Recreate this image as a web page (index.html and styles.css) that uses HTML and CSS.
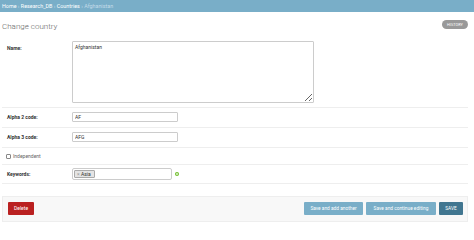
FILE: index.html
```html
<!DOCTYPE html>
<html lang="en">
<head>
<meta charset="utf-8">
<title>Change country</title>
<link rel="stylesheet" href="styles.css">
</head>
<body>
<div class="breadcrumbs">
  <a href="#">Home</a> › <a href="#">Research_DB</a> › <a href="#">Countries</a> › <span class="current">Afghanistan</span>
</div>
<div class="content">
  <div class="title-row">
    <h1>Change country</h1>
    <a class="history" href="#">HISTORY</a>
  </div>
  <form>
    <div class="module">
      <div class="form-row row-name">
        <label class="label">Name:</label>
        <textarea class="textarea">Afghanistan</textarea>
      </div>
      <div class="form-row row-text">
        <label class="label">Alpha 2 code:</label>
        <input class="text-input" type="text" value="AF">
      </div>
      <div class="form-row row-text">
        <label class="label">Alpha 3 code:</label>
        <input class="text-input" type="text" value="AFG">
      </div>
      <div class="form-row row-check">
        <input class="checkbox" type="checkbox" id="ind">
        <label class="check-label" for="ind">Independent</label>
      </div>
      <div class="form-row row-keywords">
        <label class="label">Keywords:</label>
        <div class="select-box">
          <span class="tag"><span class="tag-x">×</span> Asia</span>
        </div>
        <svg class="add-icon" width="4" height="4" viewBox="0 0 8 8"><circle cx="4" cy="4" r="4" fill="#70bf2b"/><path d="M4 2v4M2 4h4" stroke="#fff" stroke-width="1.4"/></svg>
      </div>
    </div>
    <div class="submit-row">
      <a class="btn btn-delete" href="#">Delete</a>
      <div class="right-buttons">
        <span class="btn btn-light btn-another">Save and add another</span>
        <span class="btn btn-light btn-continue">Save and continue editing</span>
        <span class="btn btn-save">SAVE</span>
      </div>
    </div>
  </form>
</div>
</body>
</html>
```
FILE: styles.css
```css
html, body {
  margin: 0;
  padding: 0;
  background: #fff;
  font-family: Roboto, "Liberation Sans", sans-serif;
  color: #333;
}

.breadcrumbs {
  height: 12px;
  line-height: 12px;
  background: #79aec8;
  color: #c4dce8;
  font-size: 5.4px;
  padding: 0 2px;
  white-space: nowrap;
}

.breadcrumbs a {
  color: #fff;
  text-decoration: none;
}

.breadcrumbs .current {
  color: #c4dce8;
}

.content {
  padding: 0 6px 0 2px;
}

.title-row {
  height: 26px;
  display: flex;
  align-items: center;
  justify-content: space-between;
}

h1 {
  margin: 0;
  font-size: 8px;
  font-weight: 300;
  color: #666;
  padding-top: 2px;
}

.history {
  display: block;
  height: 9px;
  line-height: 9px;
  padding: 0 5px;
  border-radius: 5px;
  background: #999;
  color: #fff;
  font-size: 3.8px;
  text-decoration: none;
  letter-spacing: 0.1px;
  margin-bottom: 2px;
}

form {
  margin: 0;
}

.form-row {
  display: flex;
  align-items: flex-start;
  border-bottom: 1px solid #eee;
  padding-left: 5px;
}

.label {
  width: 65px;
  flex: none;
  font-size: 5px;
  font-weight: 700;
  color: #333;
}

.row-name {
  padding: 3px 0 4px 5px;
}

.row-name .label {
  padding-top: 4px;
}

.textarea {
  box-sizing: border-box;
  width: 242px;
  height: 62px;
  margin: 0;
  padding: 2px;
  border: 1px solid #ccc;
  border-radius: 1px;
  font-family: Roboto, "Liberation Sans", sans-serif;
  font-size: 5px;
  color: #333;
  resize: vertical;
}

.row-text {
  padding: 4px 0 5px 5px;
  align-items: center;
}

.text-input {
  box-sizing: border-box;
  width: 106px;
  height: 10px;
  margin: 0;
  padding: 0 2px;
  border: 1px solid #ccc;
  border-radius: 1px;
  font-family: Roboto, "Liberation Sans", sans-serif;
  font-size: 5px;
  color: #333;
}

.row-check {
  height: 16px;
  align-items: center;
  padding-left: 4px;
}

.checkbox {
  appearance: none;
  -webkit-appearance: none;
  box-sizing: border-box;
  width: 5px;
  height: 5px;
  margin: 0 2px 0 0;
  border: 1px solid #888;
  border-radius: 1px;
  background: #fff;
}

.check-label {
  font-size: 5px;
  color: #666;
}

.row-keywords {
  padding: 3px 0 3px 5px;
  align-items: center;
}

.select-box {
  box-sizing: border-box;
  width: 100px;
  height: 12px;
  border: 1px solid #ccc;
  border-radius: 2px;
  display: flex;
  align-items: center;
  padding-left: 1px;
}

.tag {
  box-sizing: border-box;
  display: inline-block;
  height: 8px;
  line-height: 6px;
  padding: 0 3px 0 2px;
  background: #e4e4e4;
  border: 1px solid #aaa;
  border-radius: 1px;
  font-size: 5px;
  color: #333;
}

.tag-x {
  color: #999;
}

.add-icon {
  margin-left: 3px;
  display: block;
}

.submit-row {
  margin-top: 12px;
  background: #f8f8f8;
  border: 1px solid #eee;
  padding: 5px 4px 6px 5px;
  display: flex;
  justify-content: space-between;
  align-items: center;
}

.btn {
  display: inline-block;
  box-sizing: border-box;
  height: 13px;
  line-height: 13px;
  padding: 0;
  border-radius: 1px;
  font-size: 4.8px;
  color: #fff;
  text-decoration: none;
  white-space: nowrap;
  text-align: center;
}

.btn-delete {
  background: #ba2121;
  width: 26px;
  font-size: 5px;
}

.right-buttons {
  display: flex;
  gap: 3px;
}

.btn-light {
  background: #79aec8;
}

.btn-another {
  width: 59px;
}

.btn-continue {
  width: 70px;
}

.btn-save {
  background: #417690;
  width: 24px;
}
```
